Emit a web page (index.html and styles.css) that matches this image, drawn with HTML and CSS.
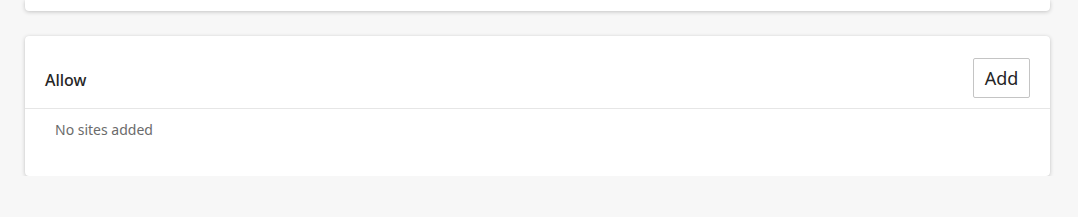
FILE: index.html
```html
<!DOCTYPE html>
<html>
  <head>
    <meta name="viewport" content="width=device-width,initial-scale=1.0" />
    <title>Site permissions</title>
    <link rel="stylesheet" href="styles.css">
  </head>
  <body>
    <div class="page">
      <div class="card card-prev"></div>

      <div class="card">
        <div class="card-header">
          <h2 class="card-title">Allow</h2>
          <button class="btn-add">Add</button>
        </div>
        <div class="card-body">
          <div class="empty">No sites added</div>
        </div>
      </div>
    </div>
  </body>
</html>
```

FILE: styles.css
```css
body {
  margin: 0;
  background: #f7f7f7;
  font-family: "Noto Sans", "Open Sans", "Liberation Sans", sans-serif;
  color: #1f1f1f;
}

.page {
  padding: 0 28px 0 25px;
  display: flex;
  flex-direction: column;
  gap: 25px;
}

.card {
  background: #fff;
  border-radius: 4px;
  box-shadow: 0 1px 4px rgba(0, 0, 0, 0.2), 0 0 1px rgba(0, 0, 0, 0.08);
}

.card-prev {
  height: 11px;
  border-radius: 0 0 4px 4px;
}

.card-header {
  display: flex;
  align-items: center;
  justify-content: space-between;
  padding: 22px 20px 10px 20px;
  border-bottom: 1px solid #e6e6e6;
}

.card-title {
  margin: 0;
  font-size: 16px;
  font-weight: 500;
  line-height: 22px;
  padding-top: 3px;
  color: #262626;
}

.btn-add {
  height: 40px;
  width: 57px;
  background: #fff;
  border: 1px solid #c4c4c4;
  border-radius: 2px;
  font-family: inherit;
  font-size: 18px;
  color: #262626;
  padding: 0;
}

.card-body {
  padding: 11px 30px 36px 30px;
}

.empty {
  font-size: 14px;
  line-height: 20px;
  color: #6b6b6b;
}
```
